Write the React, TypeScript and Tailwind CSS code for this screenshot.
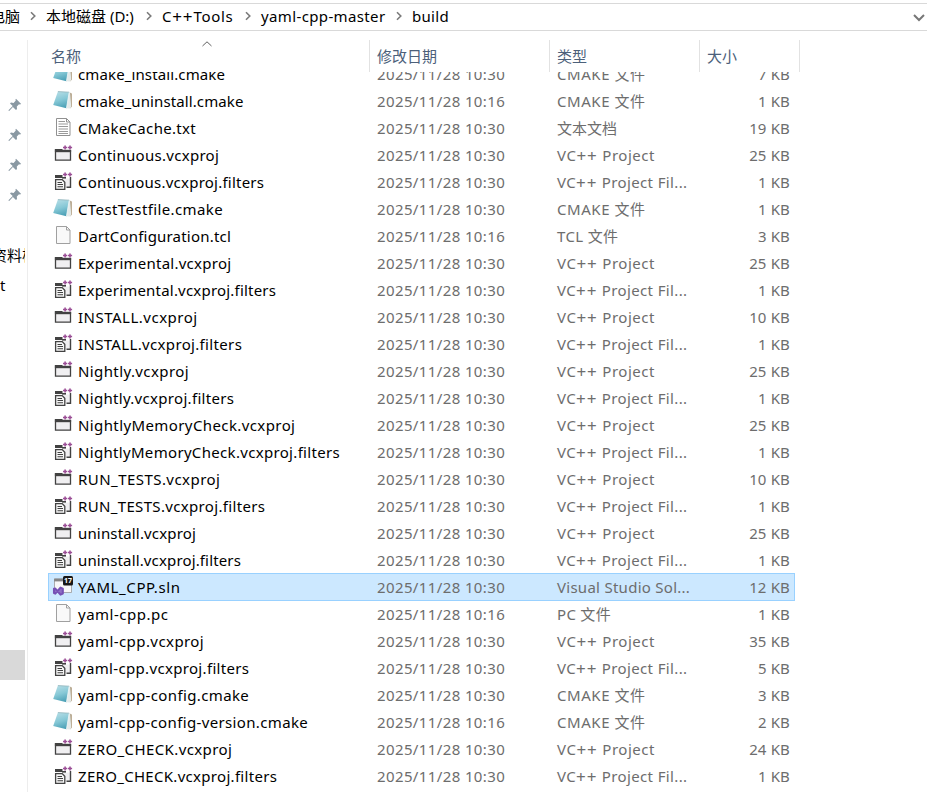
import clsx from "clsx";

type FileKind = "cmake" | "text" | "blank" | "project" | "filters" | "solution";

interface FileEntry {
  name: string;
  time: string;
  type: string;
  size: string;
  kind: FileKind;
  tracking: string;
  selected?: boolean;
}

const PROJECT = "VC++ Project";
const FILTERS = "VC++ Project Fil...";
const SOLUTION = "Visual Studio Sol...";

const typeTracking: Record<string, string> = {
  [PROJECT]: "tracking-[0.53px]",
  [FILTERS]: "tracking-[0.37px]",
  [SOLUTION]: "tracking-[0.27px]",
  "CMAKE 文件": "tracking-[0.55px]",
  "TCL 文件": "tracking-[0.35px]",
  "PC 文件": "tracking-[0.3px]",
};

const files: FileEntry[] = [
  { name: "cmake_install.cmake", time: "10:30", type: "CMAKE 文件", size: "7 KB", kind: "cmake", tracking: "tracking-[0.12px]" },
  { name: "cmake_uninstall.cmake", time: "10:16", type: "CMAKE 文件", size: "1 KB", kind: "cmake", tracking: "tracking-[0.1px]" },
  { name: "CMakeCache.txt", time: "10:30", type: "文本文档", size: "19 KB", kind: "text", tracking: "tracking-[0.32px]" },
  { name: "Continuous.vcxproj", time: "10:30", type: PROJECT, size: "25 KB", kind: "project", tracking: "tracking-[0.28px]" },
  { name: "Continuous.vcxproj.filters", time: "10:30", type: FILTERS, size: "1 KB", kind: "filters", tracking: "tracking-[0.23px]" },
  { name: "CTestTestfile.cmake", time: "10:30", type: "CMAKE 文件", size: "1 KB", kind: "cmake", tracking: "tracking-[0.39px]" },
  { name: "DartConfiguration.tcl", time: "10:16", type: "TCL 文件", size: "3 KB", kind: "blank", tracking: "tracking-[0.2px]" },
  { name: "Experimental.vcxproj", time: "10:30", type: PROJECT, size: "25 KB", kind: "project", tracking: "tracking-[0.25px]" },
  { name: "Experimental.vcxproj.filters", time: "10:30", type: FILTERS, size: "1 KB", kind: "filters", tracking: "tracking-[0.2px]" },
  { name: "INSTALL.vcxproj", time: "10:30", type: PROJECT, size: "10 KB", kind: "project", tracking: "tracking-[0.5px]" },
  { name: "INSTALL.vcxproj.filters", time: "10:30", type: FILTERS, size: "1 KB", kind: "filters", tracking: "tracking-[0.34px]" },
  { name: "Nightly.vcxproj", time: "10:30", type: PROJECT, size: "25 KB", kind: "project", tracking: "tracking-[0.4px]" },
  { name: "Nightly.vcxproj.filters", time: "10:30", type: FILTERS, size: "1 KB", kind: "filters", tracking: "tracking-[0.31px]" },
  { name: "NightlyMemoryCheck.vcxproj", time: "10:30", type: PROJECT, size: "25 KB", kind: "project", tracking: "tracking-[0.4px]" },
  { name: "NightlyMemoryCheck.vcxproj.filters", time: "10:30", type: FILTERS, size: "1 KB", kind: "filters", tracking: "tracking-[0.32px]" },
  { name: "RUN_TESTS.vcxproj", time: "10:30", type: PROJECT, size: "10 KB", kind: "project", tracking: "tracking-[0.45px]" },
  { name: "RUN_TESTS.vcxproj.filters", time: "10:30", type: FILTERS, size: "1 KB", kind: "filters", tracking: "tracking-[0.34px]" },
  { name: "uninstall.vcxproj", time: "10:30", type: PROJECT, size: "25 KB", kind: "project", tracking: "tracking-[0.16px]" },
  { name: "uninstall.vcxproj.filters", time: "10:30", type: FILTERS, size: "1 KB", kind: "filters", tracking: "tracking-[0.14px]" },
  { name: "YAML_CPP.sln", time: "10:30", type: SOLUTION, size: "12 KB", kind: "solution", tracking: "tracking-[0.6px]", selected: true },
  { name: "yaml-cpp.pc", time: "10:16", type: "PC 文件", size: "1 KB", kind: "blank", tracking: "tracking-[0.5px]" },
  { name: "yaml-cpp.vcxproj", time: "10:30", type: PROJECT, size: "35 KB", kind: "project", tracking: "tracking-[0.43px]" },
  { name: "yaml-cpp.vcxproj.filters", time: "10:30", type: FILTERS, size: "5 KB", kind: "filters", tracking: "tracking-[0.33px]" },
  { name: "yaml-cpp-config.cmake", time: "10:30", type: "CMAKE 文件", size: "3 KB", kind: "cmake", tracking: "tracking-[0.38px]" },
  { name: "yaml-cpp-config-version.cmake", time: "10:16", type: "CMAKE 文件", size: "2 KB", kind: "cmake", tracking: "tracking-[0.36px]" },
  { name: "ZERO_CHECK.vcxproj", time: "10:30", type: PROJECT, size: "24 KB", kind: "project", tracking: "tracking-[0.39px]" },
  { name: "ZERO_CHECK.vcxproj.filters", time: "10:30", type: FILTERS, size: "1 KB", kind: "filters", tracking: "tracking-[0.3px]" },
];

function PlusPlus() {
  return (
    <path
      d="M10 2.5h4.2M12.1.4v4.2M14.9 2.5h4.2M17 .4v4.2"
      stroke="#9b4f96"
      strokeWidth="1.6"
      fill="none"
    />
  );
}

function FileIcon({ kind }: { kind: FileKind }) {
  return (
    <svg className="h-5 w-5 shrink-0 overflow-visible" viewBox="0 0 20 20" aria-hidden="true">
      {kind === "cmake" && (
        <>
          <defs>
            <linearGradient id="notebook" x1="0.3" y1="0" x2="0.6" y2="1">
              <stop offset="0" stopColor="#b4dde6" />
              <stop offset="0.5" stopColor="#86c8d6" />
              <stop offset="1" stopColor="#4a9fb5" />
            </linearGradient>
          </defs>
          <path d="M16.6 1.4l2.1 1.2v12.8l-1.2 2.2z" fill="#a08a68" />
          <path d="M15.7.8l1.6 1 .9 14-1.2 1.8-4-.4z" fill="#e4eae9" />
          <path d="M4.9.6l11.3.6-2.8 16L.2 14z" fill="url(#notebook)" />
          <path d="M4.9.6l11.3.6" stroke="#8fb3ba" strokeWidth=".8" />
          <path d="M16.2 1.4L13.5 17" stroke="#f1f7f7" strokeWidth=".8" />
        </>
      )}
      {kind === "text" && (
        <>
          <path d="M3.5.5h10l3.5 3.5v13.5H3.5z" fill="#fff" stroke="#919191" />
          <path d="M13.5.5V4H17" fill="none" stroke="#919191" />
          <path d="M5.5 3.5h6.5M5.5 6h9.5M5.5 8.5h9.5M5.5 11h9.5M5.5 13.5h9.5M5.5 15.5h9.5" stroke="#999" />
        </>
      )}
      {kind === "blank" && (
        <>
          <path d="M3.5.5h10l3.5 3.5v13.5H3.5z" fill="#f9f9f9" stroke="#a0a0a0" />
          <path d="M13.5.5V4H17" fill="none" stroke="#a0a0a0" />
        </>
      )}
      {kind === "project" && (
        <>
          <path d="M2.5 5h15v10.2h-15z" fill="#f0eff1" stroke="#424242" strokeWidth="1.3" />
          <path d="M1.9 4h16.2v3.2H1.9z" fill="#424242" />
          <path d="M9.5-.5h10v5.3h-10z" fill="#fff" />
          <PlusPlus />
        </>
      )}
      {kind === "filters" && (
        <>
          <path d="M3 6.5h14.5v8.5H3z" fill="#f0eff1" />
          <path d="M2 3h7.5v3H2z" fill="#424242" />
          <path d="M9 5h4v1.6H9z" fill="#424242" />
          <path d="M13.5 15.3h4V5" fill="none" stroke="#424242" strokeWidth="1.4" />
          <path d="M2.6 7.6h6.6l2.6 2.6v7.2H2.6z" fill="#f7f7f7" stroke="#424242" strokeWidth="1.3" />
          <path d="M4.5 10.5h4.5M4.5 12.5h5.5M4.5 14.8h5.5" stroke="#424242" strokeWidth="1.1" />
          <PlusPlus />
        </>
      )}
      {kind === "solution" && (
        <>
          <path d="M1.5 2h17v13.5h-17z" fill="#f7f7f8" stroke="#9a9a9a" strokeWidth=".8" />
          <path d="M1.1 1.6h9v2.8h-9z" fill="#858585" />
          <path
            d="M1 11.8v4.2l1.3.6 5.2-6 2.3 1v5l-2.3 1-5.2-6z"
            fill="#8f70c4"
            stroke="#7650b5"
            strokeWidth="2.1"
            strokeLinejoin="round"
          />
          <rect x="10" y="-1" width="10" height="9.5" rx="1.5" fill="#171717" />
          <text x="15" y="6.3" textAnchor="middle" fontSize="7" fontWeight="700" letterSpacing="0" fill="#fff">
            17
          </text>
        </>
      )}
    </svg>
  );
}

function Chevron({ className }: { className?: string }) {
  return (
    <svg className={clsx("h-2.5 w-1.5 shrink-0", className)} viewBox="0 0 6 10" aria-hidden="true">
      <path d="M1 1.2L4.8 5 1 8.8" fill="none" stroke="#7a7a7a" strokeWidth="1.6" />
    </svg>
  );
}

function Pin() {
  return (
    <svg className="h-3.5 w-3.5" viewBox="0 0 14 14" aria-hidden="true">
      <path d="M8 .8L13.2 6l-1.4.6-.8-.3-2.2 2.2.2 2.6-1 1L4.9 9 1.2 13l-.7-.2.2-.9L4.7 8 2 5.6l1-1 2.6.3 2.2-2.3-.4-.8z" fill="#8a99a3" />
    </svg>
  );
}

// The plus signs are drawn a little larger than the letters around them.
function PlusText({ children }: { children: string }) {
  const [before, after] = children.split("++");
  if (after === undefined) {
    return <>{children}</>;
  }
  return (
    <>
      {before}
      <span className="align-[-1px] text-[17px] leading-none tracking-[1px]">++</span>
      {after}
    </>
  );
}

function AddressBar() {
  return (
    <div className="mt-[3px] flex h-7 shrink-0 items-center border-y border-[#d9d9d9] pb-0.5 text-black">
      <div className="flex w-5 shrink-0 justify-end overflow-hidden whitespace-nowrap">此电脑</div>
      <Chevron className="ml-2.5" />
      <span className="ml-2.5 w-[89px]">本地磁盘 (D:)</span>
      <Chevron className="ml-[11px]" />
      <span className="ml-2.5 w-[73px] tracking-[0.65px]">
        <PlusText>C++Tools</PlusText>
      </span>
      <Chevron className="ml-2.5" />
      <span className="ml-2.5 w-[125px] tracking-[0.37px]">yaml-cpp-master</span>
      <Chevron className="ml-2.5" />
      <span className="ml-2.5 tracking-[0.3px]">build</span>
      <svg className="mt-1 mr-0.5 ml-auto h-2 w-3" viewBox="0 0 12 8" aria-hidden="true">
        <path d="M1 1l5 5 5-5" fill="none" stroke="#777" strokeWidth="2" />
      </svg>
    </div>
  );
}

function Sidebar() {
  return (
    <aside className="mt-[9px] w-7 shrink-0 border-r border-[#ededed] text-black">
      <div className="w-[25px] overflow-hidden pt-[50px]">
        {[0, 1, 2, 3].map((pin) => (
          <div key={pin} className="flex h-[30px] items-center pl-2">
            <Pin />
          </div>
        ))}
        <div className="mt-[30px] h-[30px] leading-[30px] whitespace-nowrap">
          <span className="-ml-2">资料板</span>
        </div>
        <div className="h-[30px] leading-[30px]">t</div>
        <div className="mt-[350px] h-[30px] bg-[#d9d9d9]" />
      </div>
    </aside>
  );
}

function ColumnHeader() {
  return (
    <div className="relative mt-[9px] flex h-8 shrink-0 text-[#4c607a] leading-[33px]">
      <div className="w-[342px] border-r border-[#e2e2e2] pl-[23px]">名称</div>
      <div className="w-[180px] border-r border-[#e2e2e2] pl-[7px]">修改日期</div>
      <div className="w-[150px] border-r border-[#e2e2e2] pl-[7px]">类型</div>
      <div className="w-[100px] border-r border-[#e2e2e2] pl-[7px]">大小</div>
      <svg className="absolute top-px left-[173px] h-1.5 w-3" viewBox="0 0 12 6" aria-hidden="true">
        <path d="M1.5 5L6 .8 10.5 5" fill="none" stroke="#606060" />
      </svg>
    </div>
  );
}

function FileRow({ file }: { file: FileEntry }) {
  return (
    <li
      className={clsx(
        "-mb-px flex h-7 w-[747px] items-center border whitespace-nowrap",
        file.selected ? "border-[#99d1ff] bg-[#cce8ff]" : "border-transparent",
      )}
    >
      <div className="flex w-[328px] items-center gap-[5px] pl-1 text-black">
        <FileIcon kind={file.kind} />
        <span className={file.tracking}>{file.name}</span>
      </div>
      <div className="w-[180px] tracking-[0.38px] text-[#6d6d6d]">2025/11/28 {file.time}</div>
      <div className={clsx("w-[150px] text-[#6d6d6d]", typeTracking[file.type])}>
        <PlusText>{file.type}</PlusText>
      </div>
      <div className="flex-1 pr-1 text-right tracking-[0.15px] text-[#6d6d6d]">{file.size}</div>
    </li>
  );
}

export default function App() {
  return (
    <div className="flex h-[792px] w-[927px] flex-col overflow-hidden bg-white font-['Noto_Sans','Noto_Sans_CJK_SC',sans-serif] text-[15px]">
      <AddressBar />
      <div className="flex min-h-0 flex-1">
        <Sidebar />
        <main className="flex min-w-0 flex-1 flex-col">
          <ColumnHeader />
          <div className="min-h-0 flex-1 overflow-hidden pl-5">
            <ul className="-mt-3">
              {files.map((file) => (
                <FileRow key={file.name} file={file} />
              ))}
            </ul>
          </div>
        </main>
      </div>
    </div>
  );
}
